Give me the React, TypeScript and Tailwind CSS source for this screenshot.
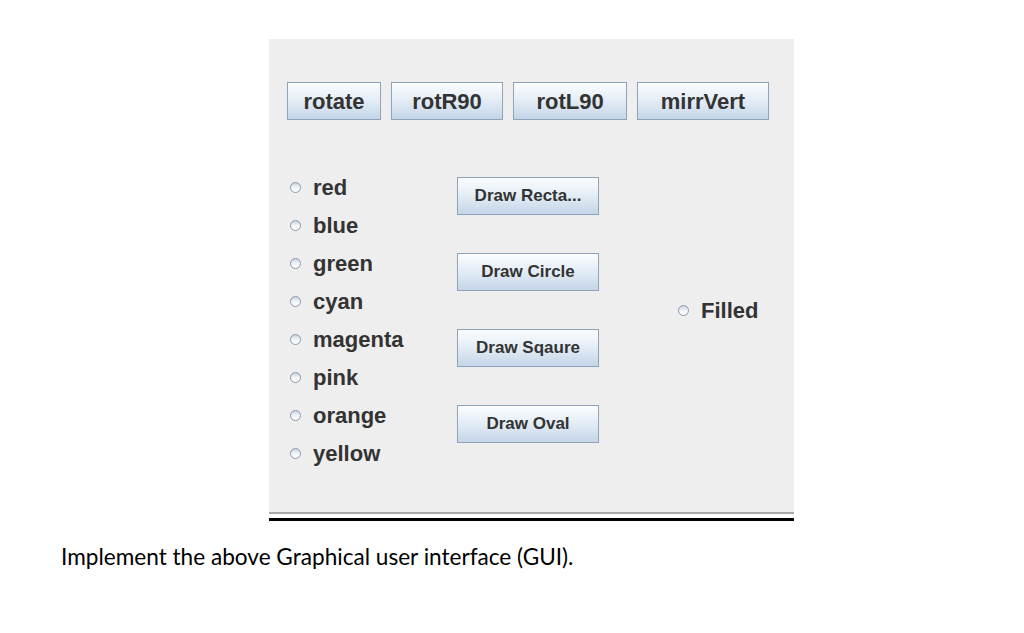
const colors = ["red", "blue", "green", "cyan", "magenta", "pink", "orange", "yellow"];
const draws = ["Draw Recta...", "Draw Circle", "Draw Sqaure", "Draw Oval"];
const tops = [
  { label: "rotate", w: "w-[94px]" },
  { label: "rotR90", w: "w-[112px]" },
  { label: "rotL90", w: "w-[114px]" },
  { label: "mirrVert", w: "w-[132px]" },
];

const btn =
  "h-[38px] flex items-center justify-center border border-[#8fa3b8] bg-gradient-to-b from-[#fbfdff] via-[#e3ecf5] to-[#c3d5e8] text-[#333333] font-bold";

function Radio({ label }: { label: string }) {
  return (
    <div className="h-[38px] flex items-center gap-[12px]">
      <span className="w-[11px] h-[11px] rounded-full border border-[#8b9aab] bg-gradient-to-b from-[#c9d3de] via-[#f2f5f8] to-[#ffffff]" />
      <span className="text-[22px] font-bold text-[#333333]">{label}</span>
    </div>
  );
}

export default function App() {
  return (
    <div className="w-[1024px] h-[633px] bg-white font-['Liberation_Sans',Arial,sans-serif]">
      <div className="pt-[39px] pl-[269px]">
        <div className="w-[525px] h-[473px] bg-[#eeeeee] flex flex-col">
          <div className="mt-[43px] ml-[18px] flex gap-[10px]">
            {tops.map((t) => (
              <button key={t.label} className={`${btn} ${t.w} text-[22px]`}>
                {t.label}
              </button>
            ))}
          </div>
          <div className="mt-[48px] ml-[21px] flex">
            <div className="w-[167px] flex flex-col">
              {colors.map((c) => (
                <Radio key={c} label={c} />
              ))}
            </div>
            <div className="pt-[9px] flex flex-col gap-[38px]">
              {draws.map((d) => (
                <button key={d} className={`${btn} w-[142px] text-[17px]`}>
                  {d}
                </button>
              ))}
            </div>
            <div className="ml-[79px] pt-[123px]">
              <Radio label="Filled" />
            </div>
          </div>
        </div>
        <div className="w-[525px] h-[2px] bg-[#a9a9a9]" />
        <div className="w-[525px] h-[3px] mt-[4px] bg-black" />
      </div>
      <p className="mt-[21px] ml-[61px] text-[22.6px] leading-[30px] text-black font-['Lato',sans-serif]">
        Implement the above Graphical user interface (GUI).
      </p>
    </div>
  );
}
